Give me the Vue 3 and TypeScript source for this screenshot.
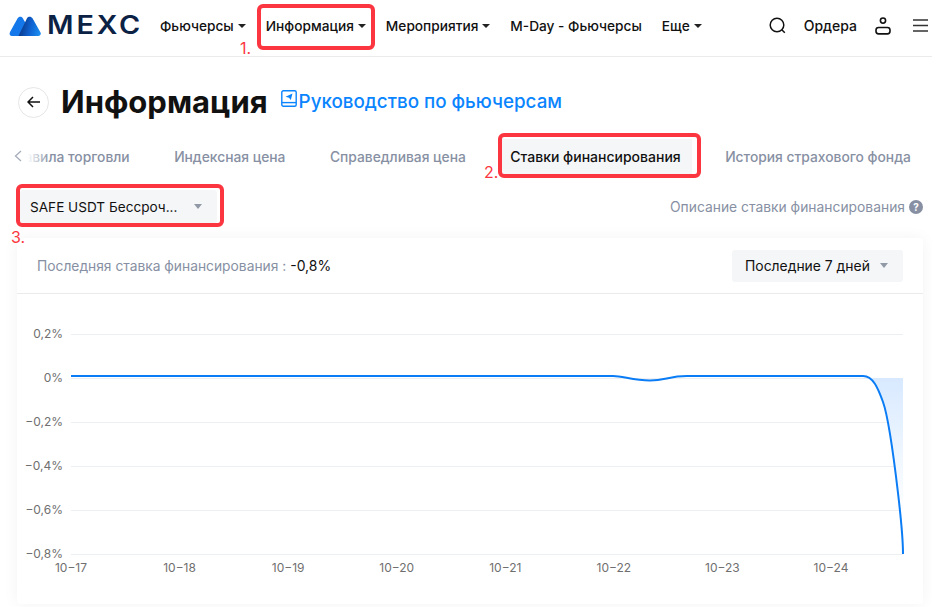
<template>
  <div class="page">
    <header class="topbar">
      <div class="logo">
        <svg width="32" height="20" viewBox="0 0 32 20">
          <defs>
            <linearGradient id="peak" x1="0" y1="0.4" x2="1" y2="0.6">
              <stop offset="0.1" stop-color="#0a3a8c" />
              <stop offset="0.55" stop-color="#0f62d0" />
              <stop offset="1" stop-color="#1a8cf0" />
            </linearGradient>
          </defs>
          <path d="M1 16 8.500 2.500C9.800.3 12.600.3 13.800 2.300L18 9.500 14 20H3C.8 20 0 18 1 16Z" fill="#1478ea" />
          <path d="M18 2.200C19.400.2 22.300.3 23.500 2.300L31.400 16.200C32.500 18 31.300 20 29.200 20H9.500L18 2.200Z" fill="url(#peak)" />
        </svg>
        <span class="wordmark">MEXC</span>
      </div>
      <nav class="nav">
        <a v-for="item in navItems" :key="item.label" class="nav-item">
          {{ item.label }}
          <i v-if="item.caret" class="caret"></i>
        </a>
      </nav>
      <div class="actions">
        <svg width="17" height="17" viewBox="0 0 17 17" fill="none" stroke="#111" stroke-width="1.500">
          <circle cx="8" cy="8" r="6.800" />
          <path d="m12.800 12.800 3 3" />
        </svg>
        <span class="orders">Ордера</span>
        <svg width="16" height="18" viewBox="0 0 16 18" fill="none" stroke="#111" stroke-width="1.600">
          <circle cx="8" cy="3.600" r="2.600" />
          <rect x="1" y="10.500" width="14" height="6.400" rx="2.600" />
        </svg>
        <svg class="menu" width="15" height="13" viewBox="0 0 15 13" fill="none" stroke="#333" stroke-width="1.300">
          <path d="M0 1h15M0 6.500h15M0 12h15" />
        </svg>
      </div>
    </header>

    <div class="title-row">
      <button class="back">
        <svg width="14" height="12" viewBox="0 0 14 12" fill="none" stroke="#111" stroke-width="1.500">
          <path d="M13 6H1.500M6 1 1 6l5 5" />
        </svg>
      </button>
      <h1>Информация</h1>
      <a class="guide">
        <svg class="guide-icon" width="16" height="17" viewBox="0 0 16 17" fill="none" stroke="#0a84ff" stroke-width="1.400">
          <rect x=".8" y=".8" width="14.400" height="15.400" rx="1.500" />
          <path d="M.8 12.600H15.200" />
          <path d="M4.500 6.800 11.500 3.500 9.800 10 8 7.800Z" fill="#0a84ff" stroke="none" />
        </svg>
        Руководство по фьючерсам
      </a>
    </div>

    <div class="tabs-row">
      <svg class="chevron" width="8" height="12" viewBox="0 0 8 12" fill="none" stroke="#a6adba" stroke-width="1.300">
        <path d="M7 1 1.500 6 7 11" />
      </svg>
      <div class="tabs">
        <span v-for="tab in tabs" :key="tab" class="tab" :class="{ active: tab === activeTab }">{{ tab }}</span>
      </div>
      <div class="tabs-fade"></div>
    </div>

    <div class="filter-row">
      <div class="select symbol">
        <span>SAFE USDT Бессроч...</span>
        <i class="arrow"></i>
      </div>
      <a class="help">
        Описание ставки финансирования
        <span class="help-icon">?</span>
      </a>
    </div>

    <section class="card">
      <div class="card-head">
        <p class="latest">Последняя ставка финансирования :<b>-0,8%</b></p>
        <div class="select period">
          <span>Последние 7 дней</span>
          <i class="arrow"></i>
        </div>
      </div>
      <svg class="chart" width="906" height="310" viewBox="0 0 906 310">
        <defs>
          <linearGradient id="area" x1="0" y1="0" x2="0" y2="1">
            <stop offset="0" stop-color="#d8e9ff" />
            <stop offset="0.46" stop-color="#f0f7ff" />
            <stop offset="0.8" stop-color="#ffffff" />
          </linearGradient>
        </defs>
        <g v-for="tick in yTicks" :key="tick.label">
          <line x1="54" x2="886" :y1="tick.y" :y2="tick.y" stroke="#edf0f2" />
          <text class="axis" x="46" :y="tick.y + 3" text-anchor="end">{{ tick.label }}</text>
        </g>
        <path d="M853 84C859 87 862 97 866 108C871 122 877 165 881 199C884 224.500 886 245 886 260V84Z" fill="url(#area)" />
        <path
          d="M54 82H596C606 82 616 86.500 633 86.500C648 86.500 652 82 670 82H846C856 82 861 94 866 108C871 122 877 165 881 199C884 224.500 886 245 886 260"
          fill="none"
          stroke="#0a7cf5"
          stroke-width="2"
        />
        <text v-for="tick in xTicks" :key="tick.label" class="axis" :x="tick.x" y="278" text-anchor="middle">{{ tick.label }}</text>
      </svg>
    </section>

    <!-- annotations drawn on top of the screenshot -->
    <div class="mark mark-1"></div>
    <div class="mark mark-2"></div>
    <div class="mark mark-3"></div>
    <span class="mark-num num-1">1.</span>
    <span class="mark-num num-2">2.</span>
    <span class="mark-num num-3">3.</span>
  </div>
</template>

<script setup lang="ts">
const navItems = [
  { label: 'Фьючерсы', caret: true },
  { label: 'Информация', caret: true },
  { label: 'Мероприятия', caret: true },
  { label: 'M-Day - Фьючерсы', caret: false },
  { label: 'Еще', caret: true }
];

const tabs = [
  'Правила торговли',
  'Индексная цена',
  'Справедливая цена',
  'Ставки финансирования',
  'История страхового фонда'
];
const activeTab = 'Ставки финансирования';

const yTicks = ['0,2%', '0%', '−0,2%', '−0,4%', '−0,6%', '−0,8%'].map((label, i) => ({
  label,
  y: 40.5 + i * 44
}));

const xTicks = ['10−17', '10−18', '10−19', '10−20', '10−21', '10−22', '10−23', '10−24'].map((label, i) => ({
  label,
  x: 54 + (i * 760) / 7
}));
</script>

<style scoped>
.page {
  position: relative;
  width: 932px;
  height: 607px;
  overflow: hidden;
  background: #fff;
  font-family: Inter, "Liberation Sans", sans-serif;
  color: #111;
}

.topbar {
  display: flex;
  align-items: center;
  box-sizing: border-box;
  height: 57px;
  padding: 0 4px 5px 9px;
  border-bottom: 1px solid #ebebeb;
}

.logo {
  display: flex;
  align-items: center;
  gap: 6px;
  width: 151px;
}

.wordmark {
  font-size: 25px;
  font-weight: 600;
  letter-spacing: 2.500px;
  color: #0b2245;
  line-height: 1;
  transform: scaleX(1.15);
  transform-origin: left;
}

.nav {
  display: flex;
  align-items: center;
  gap: 20px;
  flex: 1;
}

.nav-item {
  display: flex;
  align-items: center;
  gap: 4px;
  font-size: 13.700px;
  font-weight: 450;
  white-space: nowrap;
}

.caret {
  width: 0;
  height: 0;
  border-left: 4px solid transparent;
  border-right: 4px solid transparent;
  border-top: 4.500px solid #222;
}

.actions {
  display: flex;
  align-items: center;
  gap: 18px;
}

.orders {
  font-size: 14px;
  font-weight: 450;
}

.menu {
  margin-left: 4px;
}

.title-row {
  display: flex;
  align-items: center;
  height: 90px;
  padding-left: 18px;
}

.back {
  display: flex;
  align-items: center;
  justify-content: center;
  width: 31px;
  height: 31px;
  padding: 0;
  border: 1.500px solid #e6e6e6;
  border-radius: 50%;
  background: #fff;
}

h1 {
  margin: 0 13px 0 12px;
  font-size: 31px;
  font-weight: 700;
  line-height: 40px;
}

.guide {
  display: flex;
  align-items: center;
  gap: 2px;
  margin-top: -2px;
  font-size: 18.800px;
  font-weight: 500;
  color: #0a84ff;
}

.guide-icon {
  margin-top: -6px;
}

.tabs-row {
  position: relative;
  display: flex;
  align-items: center;
  height: 36px;
  margin-top: -8px;
  overflow: hidden;
}

.chevron {
  position: absolute;
  left: 14px;
  top: 11px;
  z-index: 2;
}

.tabs {
  display: flex;
  align-items: center;
  gap: 22.500px;
  margin-left: -5.500px;
}

.tab {
  padding: 0 11px;
  line-height: 36px;
  font-size: 13.800px;
  font-weight: 500;
  color: #8790a3;
  white-space: nowrap;
}

.tab.active {
  background: #f5f6f8;
  color: #111;
  font-size: 14px;
}

.tabs-fade {
  position: absolute;
  left: 0;
  top: 0;
  width: 50px;
  height: 36px;
  background: linear-gradient(90deg, #fff 55%, rgba(255, 255, 255, 0));
}

.filter-row {
  display: flex;
  align-items: center;
  justify-content: space-between;
  margin-top: 15px;
  padding: 0 9px 0 20px;
}

.select {
  display: flex;
  align-items: center;
  justify-content: space-between;
  background: #f5f6f8;
  border-radius: 3px;
  font-size: 13.600px;
  white-space: nowrap;
}

.symbol {
  width: 197px;
  height: 33px;
  padding: 0 15px 0 10px;
  box-sizing: border-box;
}

.period {
  width: 171px;
  height: 32px;
  padding: 0 15px 0 13px;
  box-sizing: border-box;
  font-size: 13.900px;
}

.arrow {
  width: 0;
  height: 0;
  border-left: 4.500px solid transparent;
  border-right: 4.500px solid transparent;
  border-top: 5px solid #9299a6;
}

.help {
  display: flex;
  align-items: center;
  gap: 4px;
  font-size: 13.850px;
  color: #8790a3;
}

.help-icon {
  display: flex;
  align-items: center;
  justify-content: center;
  width: 14px;
  height: 14px;
  border-radius: 50%;
  background: #8790a3;
  color: #fff;
  font-size: 10px;
  font-weight: 700;
}

.card {
  width: 906px;
  height: 366px;
  margin: 15px 0 0 17px;
  border-radius: 4px;
  box-shadow: 0 0 16px rgba(0, 0, 0, 0.05);
}

.card-head {
  display: flex;
  align-items: center;
  justify-content: space-between;
  height: 55px;
  padding: 0 20px;
  border-bottom: 1px solid #ebebeb;
}

.latest {
  margin: 0;
  font-size: 13.800px;
  color: #8790a3;
}

.latest b {
  margin-left: 4px;
  font-size: 14px;
  font-weight: 400;
  color: #111;
}

.chart {
  display: block;
}

.axis {
  font-size: 12px;
  fill: #6f6f6f;
}

.mark {
  position: absolute;
  border: 4px solid #fb3640;
  border-radius: 6px;
  box-sizing: border-box;
}

.mark-1 {
  left: 257px;
  top: 4px;
  width: 118px;
  height: 46px;
}

.mark-2 {
  left: 498px;
  top: 133px;
  width: 203px;
  height: 45px;
}

.mark-3 {
  left: 16px;
  top: 184px;
  width: 208px;
  height: 43px;
}

.mark-num {
  position: absolute;
  font-size: 16px;
  line-height: 18px;
  color: #fb3640;
}

.num-1 {
  left: 240px;
  top: 39px;
}

.num-2 {
  left: 484px;
  top: 163px;
}

.num-3 {
  left: 11px;
  top: 228px;
}
</style>
